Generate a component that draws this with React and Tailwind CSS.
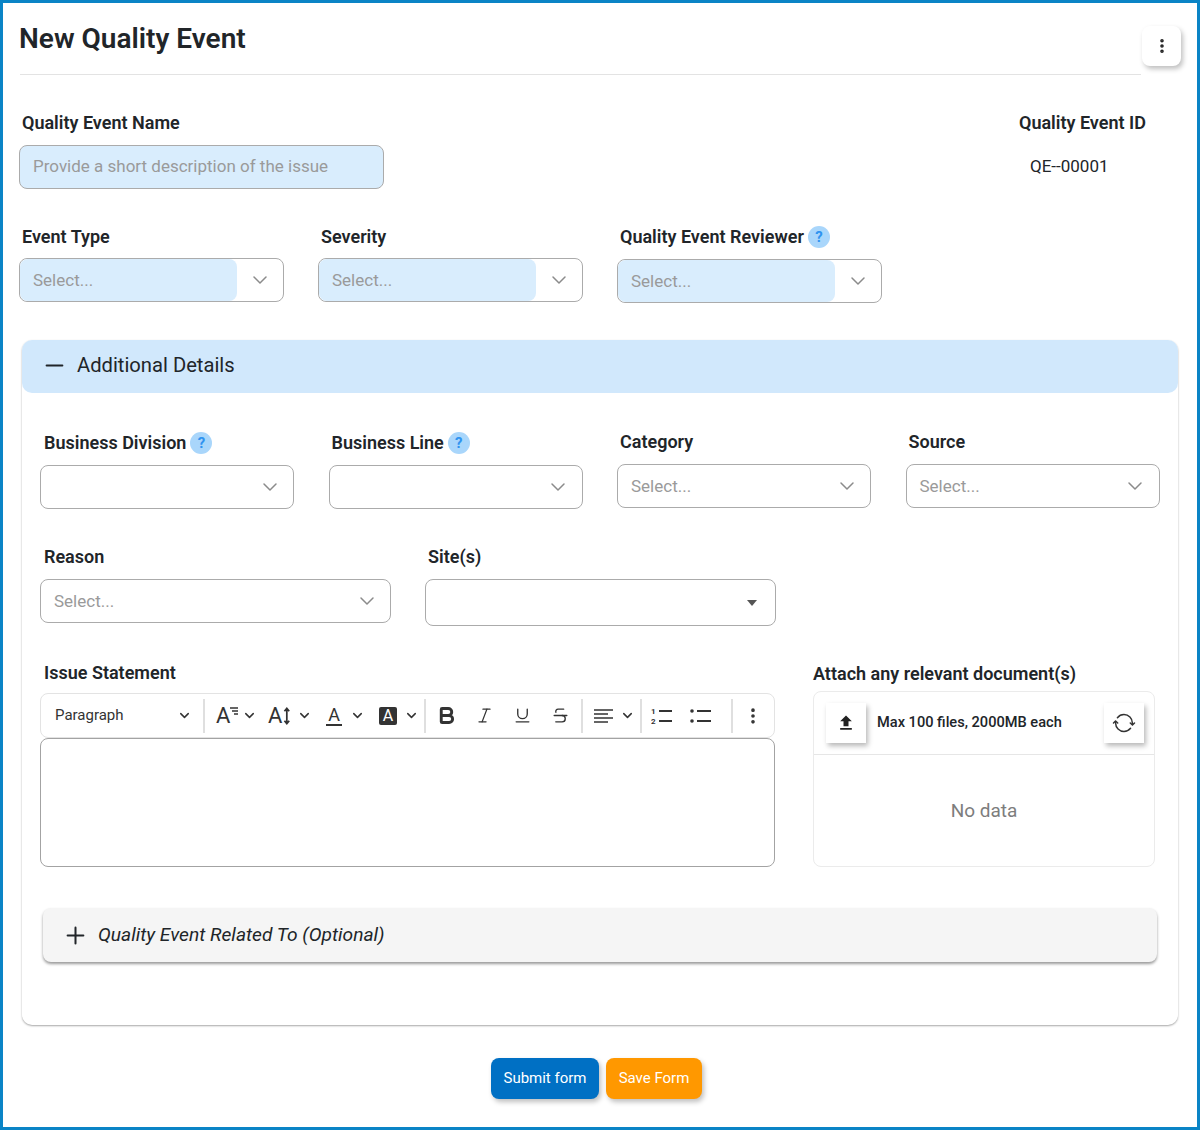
import React from "react";
import {
    Bold,
    ChevronDown,
    Italic,
    Strikethrough,
    Underline,
    EllipsisVertical,
    Minus,
    Plus,
} from "lucide-react";
import { MdFileUpload } from "react-icons/md";
import { IoSync } from "react-icons/io5";

const Help = () => (
    <span className="ml-[4px] flex h-[22px] w-[22px] items-center justify-center rounded-full bg-[#a9d6fb] text-[15px] font-bold text-[#2f93f0]">
        ?
    </span>
);

const Label = ({ children, help, className = "" }) => (
    <div className={`flex h-[22px] items-center text-[18px] font-semibold leading-[22px] text-[#212529] ${className}`}>
        {children}
        {help && <Help />}
    </div>
);

// wide blue part only shows on the required selects
const Select = ({ placeholder, filled, caret, className = "" }) => (
    <div className={`flex h-[44px] items-stretch rounded-[8px] border border-[#ababab] bg-white ${className}`}>
        <div
            className={`flex min-w-0 items-center pl-[13px] pt-[1px] text-[17px] text-[#9a9a9a] ${
                filled ? "w-[217px] rounded-[8px] bg-[#d9edfd]" : "flex-1"
            }`}
        >
            {placeholder}
        </div>
        <div className={`flex items-center justify-center ${filled ? "flex-1" : "w-[47px]"}`}>
            {caret ? (
                <span className="h-0 w-0 border-x-[5px] border-t-[6px] border-x-transparent border-t-[#555]" />
            ) : (
                <ChevronDown size={24} strokeWidth={1.5} className="text-[#8b8b8b]" />
            )}
        </div>
    </div>
);

const Field = ({ label, help, labelClass = "ml-[3px]", gap = "mt-[11px]", width, ...rest }) => (
    <div className={width}>
        <Label help={help} className={labelClass}>
            {label}
        </Label>
        <Select className={gap} {...rest} />
    </div>
);

const Small = ({ className = "" }) => (
    <ChevronDown size={15} strokeWidth={2.4} className={`text-[#333] ${className}`} />
);

const Sep = ({ className = "" }) => <div className={`h-[34px] w-[2px] bg-[#dfdfdf] ${className}`} />;

const Toolbar = () => (
    <div className="flex h-[45px] items-center rounded-[8px] border border-[#e3e3e3] text-[#333]">
        <span className="ml-[14px] w-[122px] text-[15px] text-[#333]">Paragraph</span>
        <Small />
        <Sep className="ml-[11px]" />
        {/* font family */}
        <span className="relative ml-[11px] w-[20px] text-[22px] leading-none">
            A
            <svg width="8" height="9" viewBox="0 0 8 9" className="absolute right-[-2px] top-[2px]">
                <path d="M0 1h8M2 4h6M4 7h4" stroke="#333" strokeWidth="1.300" />
            </svg>
        </span>
        <Small className="ml-[6px]" />
        {/* font size */}
        <span className="ml-[11px] flex w-[23px] items-center text-[22px] leading-none">
            A
            <svg width="8" height="20" viewBox="0 0 8 20" className="ml-[1px]">
                <path d="M4 2v16M1.500 5 4 2l2.500 3M1.500 15 4 18l2.500-3" fill="none" stroke="#333" strokeWidth="1.800" />
            </svg>
        </span>
        <Small className="ml-[6px]" />
        {/* font color */}
        <span className="ml-[14px] w-[16px] border-b-[2px] border-[#333] text-center text-[18px] leading-[19px]">A</span>
        <Small className="ml-[8px]" />
        {/* background color */}
        <span className="ml-[14px] flex h-[18px] w-[18px] items-center justify-center rounded-[2px] bg-[#333] text-[16px] leading-none text-white">
            A
        </span>
        <Small className="ml-[7px]" />
        <Sep className="ml-[5px]" />
        <Bold size={21} strokeWidth={3.300} className="ml-[10px]" />
        <Italic size={19} strokeWidth={1.500} className="ml-[18px]" />
        <Underline size={19} strokeWidth={1.700} className="ml-[19px]" />
        <Strikethrough size={19} strokeWidth={1.700} className="ml-[19px]" />
        <Sep className="ml-[11px]" />
        {/* alignment, four lines */}
        <svg width="20" height="16" viewBox="0 0 20 16" className="ml-[11px]">
            <path d="M0 2h19M0 6h14M0 10h19M0 14h14" stroke="#333" strokeWidth="1.600" />
        </svg>
        <Small className="ml-[6px]" />
        <Sep className="ml-[5px]" />
        {/* numbered list */}
        <svg width="22" height="18" viewBox="0 0 22 18" className="ml-[9px]">
            <text x="0" y="7" fontSize="8" fontWeight="700" fill="#333">1</text>
            <text x="0" y="17" fontSize="8" fontWeight="700" fill="#333">2</text>
            <path d="M8 4h13M8 14h13" stroke="#333" strokeWidth="1.800" />
        </svg>
        <svg width="22" height="16" viewBox="0 0 22 16" className="ml-[17px]">
            <circle cx="2" cy="3" r="1.800" fill="#333" />
            <circle cx="2" cy="13" r="1.800" fill="#333" />
            <path d="M7 3h14M7 13h14" stroke="#333" strokeWidth="1.800" />
        </svg>
        <Sep className="ml-[19px]" />
        <EllipsisVertical size={20} strokeWidth={2.400} className="ml-[10px]" />
    </div>
);

const IconButton = ({ children, className = "" }) => (
    <div className={`flex h-[40px] w-[40px] items-center justify-center bg-white shadow-[2px_3px_5px_rgba(0,0,0,0.28)] ${className}`}>
        {children}
    </div>
);

const Attachments = () => (
    <div className="mt-[6px] h-[176px] w-[342px] rounded-[8px] border border-[#ebebeb]">
        <div className="flex h-[63px] items-center border-b border-[#e6e6e6] pl-[12px] pr-[10px]">
            <IconButton>
                <MdFileUpload size={20} className="text-[#222]" />
            </IconButton>
            <span className="ml-[11px] flex-1 text-[14.600px] font-medium text-[#212529]">Max 100 files, 2000MB each</span>
            <IconButton>
                <IoSync size={24} className="text-[#333]" />
            </IconButton>
        </div>
        <div className="flex h-[111px] items-center justify-center pt-[2px] text-[19px] text-[#7d7d7d]">No data</div>
    </div>
);

const App = () => {
    return (
        <div className="relative h-[1130px] w-[1200px] border-[3px] border-[#0a84c6] bg-white pl-[16px] pr-[15px] font-['Roboto',sans-serif] text-[#212529]">
            <div className="flex">
                <div className="ml-[1px] h-[72px] w-[1121px] border-b border-[#e3e3e3] pt-[18px] text-[28px] font-semibold leading-[36px] text-[#212529]">
                    <div className="-ml-[1px]">New Quality Event</div>
                </div>
                <div className="ml-[1px] mt-[23px] flex h-[40px] w-[39px] items-center justify-center rounded-[8px] bg-white shadow-[2px_3px_5px_rgba(0,0,0,0.25)]">
                    <EllipsisVertical size={18} strokeWidth={2.800} className="text-[#222]" />
                </div>
            </div>

            <div className="mt-[37px] flex justify-between">
                <div>
                    <Label className="ml-[3px]">Quality Event Name</Label>
                    <div className="mt-[11px] flex h-[44px] w-[365px] items-center rounded-[8px] border border-[#ababab] bg-[#d9edfd] pl-[13px] text-[17px] text-[#9a9a9a]">
                        Provide a short description of the issue
                    </div>
                </div>
                <div className="mr-[36px] w-[127px]">
                    <Label>Quality Event ID</Label>
                    <div className="mt-[11px] flex h-[44px] items-center pl-[11px] text-[17px] text-[#212529]">QE--00001</div>
                </div>
            </div>

            <div className="mt-[37px] flex gap-[34px]">
                <Field label="Event Type" placeholder="Select..." filled width="w-[265px]" gap="mt-[10px]" />
                <Field label="Severity" placeholder="Select..." filled width="w-[265px]" gap="mt-[10px]" />
                <Field label="Quality Event Reviewer" help placeholder="Select..." filled width="w-[265px]" />
            </div>

            <div className="ml-[3px] mt-[37px] h-[685px] w-[1156px] rounded-[10px] bg-white shadow-[0_1px_2px_rgba(0,0,0,0.35)]">
                <div className="flex h-[53px] items-center rounded-[10px] bg-[#d1e8fc] pb-[2px] pl-[19px] text-[20.200px] text-[#212529]">
                    <Minus size={27} strokeWidth={1.800} />
                    <span className="ml-[9px]">Additional Details</span>
                </div>

                <div className="pl-[18px] pr-[18px] pt-[38px]">
                    <div className="flex gap-[34.500px]">
                        <Field label="Business Division" help labelClass="ml-[4px] mt-[1px]" width="w-[254px]" />
                        <Field label="Business Line" help labelClass="ml-[3px] mt-[1px]" width="w-[254px]" />
                        <Field label="Category" placeholder="Select..." width="w-[254px]" />
                        <Field label="Source" placeholder="Select..." width="w-[254px]" />
                    </div>

                    <div className="mt-[37px] flex gap-[34px]">
                        <Field label="Reason" labelClass="ml-[4px]" placeholder="Select..." width="w-[351px]" />
                        <Field label="Site(s)" caret width="w-[351px]" gap="mt-[11px] !h-[47px]" />
                    </div>

                    <div className="mt-[36px] flex">
                        <div className="w-[735px]">
                            <Label className="ml-[4px]">Issue Statement</Label>
                            <div className="mt-[9px]">
                                <Toolbar />
                            </div>
                            <div className="h-[129px] rounded-[8px] border border-[#a3a3a3]" />
                        </div>
                        <div className="ml-[38px] pt-[1px]">
                            <Label>Attach any relevant document(s)</Label>
                            <Attachments />
                        </div>
                    </div>

                    <div className="ml-[3px] mt-[41px] flex h-[54px] w-[1114px] items-center rounded-[8px] bg-[#f5f5f5] pl-[19px] text-[19.200px] italic text-[#212529] shadow-[0_2px_3px_rgba(0,0,0,0.4)]">
                        <Plus size={27} strokeWidth={1.800} />
                        <span className="ml-[9px]">Quality Event Related To (Optional)</span>
                    </div>
                </div>
            </div>

            <div className="ml-[472px] mt-[33px] flex gap-[7px] text-[15px] text-white">
                <button className="h-[41px] w-[108px] rounded-[8px] bg-[#0070c4] shadow-[2px_3px_5px_rgba(0,0,0,0.25)]">Submit form</button>
                <button className="h-[41px] w-[96px] rounded-[8px] bg-[#ff9800] shadow-[2px_3px_5px_rgba(0,0,0,0.25)]">Save Form</button>
            </div>
        </div>
    );
};

export default App;
